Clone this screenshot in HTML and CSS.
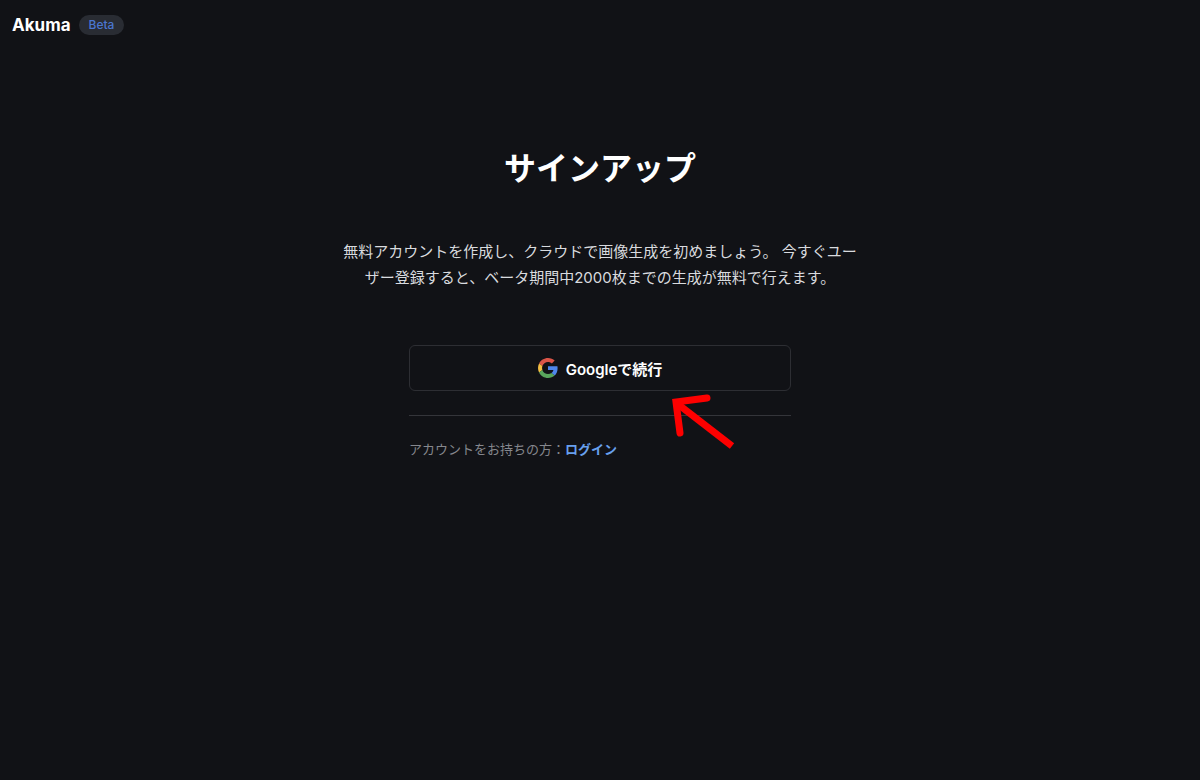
FILE: index.html
```html
<!DOCTYPE html>
<html lang="ja">
  <head>
    <meta charset="UTF-8" />
    <meta name="viewport" content="width=device-width, initial-scale=1.0" />
    <title>サインアップ | Akuma</title>
    <link rel="stylesheet" href="styles.css">
  </head>
  <body>
    <header class="header">
      <a class="logo" href="#">Akuma</a>
      <span class="badge">Beta</span>
    </header>
    <main class="signup">
      <h1>サインアップ</h1>
      <p class="lead">無料アカウントを作成し、クラウドで画像生成を初めましょう。 今すぐユーザー登録すると、ベータ期間中2000枚までの生成が無料で行えます。</p>
      <div class="panel">
        <button class="google" type="button">
          <svg width="20" height="20" viewBox="0 0 48 48" aria-hidden="true">
            <path fill="#db5548" d="M24 9.5c3.54 0 6.71 1.22 9.21 3.6l6.85-6.85C35.9 2.38 30.47 0 24 0 14.62 0 6.51 5.38 2.56 13.22l7.98 6.19C12.43 13.72 17.74 9.5 24 9.5z"/>
            <path fill="#4f86ec" d="M46.98 24.55c0-1.57-.15-3.09-.38-4.55H24v9.02h12.94c-.58 2.96-2.26 5.48-4.78 7.18l7.73 6c4.51-4.18 7.09-10.36 7.09-17.65z"/>
            <path fill="#f2bd42" d="M10.53 28.59c-.48-1.45-.76-2.99-.76-4.59s.27-3.14.76-4.59l-7.98-6.19C.92 16.46 0 20.12 0 24c0 3.88.92 7.54 2.56 10.78l7.97-6.19z"/>
            <path fill="#58a55c" d="M24 48c6.48 0 11.93-2.13 15.89-5.81l-7.73-6c-2.15 1.45-4.92 2.3-8.16 2.3-6.26 0-11.57-4.22-13.47-9.91l-7.98 6.19C6.51 42.62 14.62 48 24 48z"/>
          </svg>
          Googleで続行
        </button>
        <svg class="arrow" width="66" height="58" viewBox="0 0 66 58" aria-hidden="true">
          <path d="M61 53 8 12" stroke-width="7"/>
          <path d="M36 5 5 9 9 40" stroke-width="7" stroke-linecap="round"/>
        </svg>
        <hr>
        <p class="login">アカウントをお持ちの方：<a href="#">ログイン</a></p>
      </div>
    </main>
  </body>
</html>
```
FILE: styles.css
```css
* {
  box-sizing: border-box;
}

body {
  margin: 0;
  min-height: 100vh;
  background-color: #111216;
  color: #fff;
  font-family: Inter, "Noto Sans CJK JP", sans-serif;
}

a {
  text-decoration: none;
}

.header {
  display: flex;
  align-items: center;
  gap: 8px;
  height: 50px;
  padding: 0 12px;
}

.logo {
  color: #fff;
  font-size: 17px;
  font-weight: 700;
}

.badge {
  padding: 0 10px;
  border-radius: 10px;
  background-color: #292c33;
  color: #4a76cf;
  font-size: 12px;
  font-weight: 500;
  line-height: 20px;
}

.signup {
  max-width: 520px;
  margin: 0 auto;
  padding-top: 95px;
}

h1 {
  margin: 0;
  font-size: 32px;
  font-weight: 700;
  line-height: 48px;
  text-align: center;
}

.lead {
  margin: 46px 0 0;
  color: #d9dbdf;
  font-size: 15px;
  line-height: 26px;
  text-align: center;
}

.panel {
  position: relative;
  max-width: 382px;
  margin: 54px auto 0;
}

.google {
  display: flex;
  align-items: center;
  justify-content: center;
  gap: 8px;
  width: 100%;
  height: 46px;
  border: 1px solid #2d2e33;
  border-radius: 6px;
  background-color: transparent;
  color: #fff;
  font-family: inherit;
  font-size: 15px;
  font-weight: 600;
  cursor: pointer;
}

.google:hover {
  background-color: #1b1d22;
}

/* points at the button, drawn over the divider */
.arrow {
  position: absolute;
  top: 48px;
  left: 262px;
  fill: none;
  stroke: #fe0000;
  stroke-linejoin: miter;
  pointer-events: none;
}

hr {
  margin: 24px 0;
  border: 0;
  border-top: 1px solid #34353a;
}

.login {
  margin: 0;
  color: #85878d;
  font-size: 13px;
  line-height: 18px;
}

.login a {
  color: #68a0ee;
  font-weight: 700;
}
```
